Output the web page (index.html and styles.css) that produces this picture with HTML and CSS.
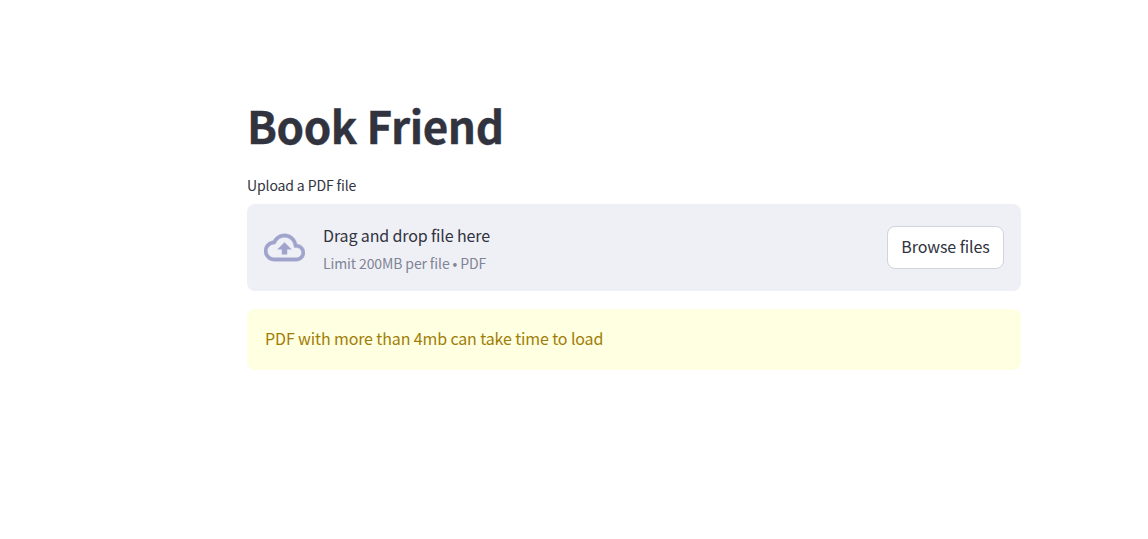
FILE: index.html
```html
<!DOCTYPE html>
<html lang="en">
<head>
<meta charset="utf-8">
<title>Book Friend</title>
<link rel="stylesheet" href="styles.css">
</head>
<body>
<main class="page">
  <h1 class="title">Book Friend</h1>
  <label class="label">Upload a PDF file</label>
  <section class="dropzone">
    <svg class="cloud" viewBox="0 0 24 24" aria-hidden="true"><path d="M19.35 10.04C18.67 6.59 15.64 4 12 4 9.11 4 6.6 5.64 5.35 8.04 2.34 8.36 0 10.91 0 14c0 3.31 2.69 6 6 6h13c2.76 0 5-2.24 5-5 0-2.64-2.05-4.78-4.65-4.96zM19 18H6c-2.21 0-4-1.79-4-4 0-2.05 1.53-3.76 3.56-3.97l1.07-.11.5-.95C8.08 7.14 9.94 6 12 6c2.62 0 4.88 1.86 5.39 4.43l.3 1.5 1.53.11c1.56.1 2.78 1.41 2.78 2.96 0 1.65-1.35 3-3 3zM8 13h2.55v3h2.9v-3H16l-4-4z"/></svg>
    <div class="dz-text">
      <div class="dz-title">Drag and drop file here</div>
      <div class="dz-sub">Limit 200MB per file • PDF</div>
    </div>
    <button class="browse" type="button">Browse files</button>
  </section>
  <div class="alert">PDF with more than 4mb can take time to load</div>
</main>
</body>
</html>
```
FILE: styles.css
```css
* { box-sizing: border-box; }
html, body { margin: 0; padding: 0; background: #fff; }
body {
  font-family: "Noto Sans CJK JP", "Noto Sans", sans-serif;
  color: #31333f;
  height: 539px;
  overflow: hidden;
}
.page { width: 774px; margin-left: 247px; padding-top: 95px; }
.title { margin: 0; font-size: 44px; font-weight: 700; line-height: 61px; height: 62px; color: #31333f; letter-spacing: -0.4px; -webkit-text-stroke: 0.35px #31333f; }
.label { display: block; margin-top: 18px; font-size: 14px; line-height: 20px; height: 20px; letter-spacing: -0.12px; }
.dropzone {
  display: flex; align-items: center;
  margin-top: 9px; height: 87px; padding: 0 17px;
  background: #eff0f6; border-radius: 8px;
}
.cloud { width: 41px; height: 41px; fill: #a0a4cc; stroke: #a0a4cc; stroke-width: 0.25; flex: none; }
.dz-text { flex: 1; margin-left: 18px; }
.dz-title { font-size: 16px; line-height: 24px; margin-top: 1px; letter-spacing: -0.13px; }
.dz-sub { font-size: 14px; line-height: 20px; margin-top: 6px; color: #808495; letter-spacing: -0.115px; }
.browse {
  width: 117px; height: 43px; padding: 0 0 4px;
  font: inherit; font-size: 16px; color: #31333f; letter-spacing: -0.08px;
  background: #fff; border: 1px solid #d3d4da; border-radius: 8px;
}
.alert {
  margin-top: 18px; height: 61px; padding: 0 17px 4px 18px;
  display: flex; align-items: center;
  background: #ffffe2; color: #a07d05; border-radius: 8px;
  font-size: 16px; letter-spacing: -0.13px;
}
```
